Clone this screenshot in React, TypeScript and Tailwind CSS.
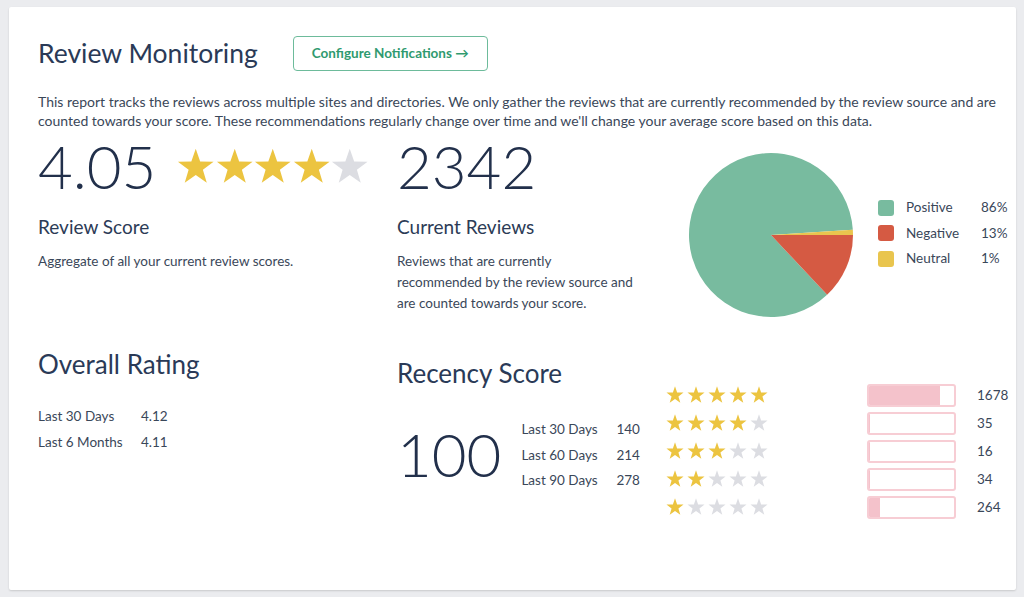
import React from "react";

const F = { fontFamily: "Lato, 'Noto Sans', sans-serif" };

function starPoints() {
  const R = 50;
  const r = R * 0.4;
  const cx = 50;
  const cy = 52;
  const pts: string[] = [];
  for (let i = 0; i < 10; i++) {
    const a = (Math.PI / 5) * i - Math.PI / 2;
    const rad = i % 2 === 0 ? R : r;
    pts.push(`${(cx + rad * Math.cos(a)).toFixed(2)},${(cy + rad * Math.sin(a)).toFixed(2)}`);
  }
  return pts.join(" ");
}
const PTS = starPoints();

function Star({ on, size }: { on: boolean; size: number }) {
  return (
    <svg width={size} height={size * 0.95} viewBox="0 0 100 95" className="block">
      <polygon points={PTS} fill={on ? "#ecc440" : "#dcdde2"} />
    </svg>
  );
}

function Stars({ n, size, gap }: { n: number; size: number; gap: string }) {
  return (
    <div className={`flex ${gap}`}>
      {[0, 1, 2, 3, 4].map((i) => (
        <Star key={i} on={i < n} size={size} />
      ))}
    </div>
  );
}

function Pie() {
  const cx = 84, cy = 84, R = 82;
  const pt = (deg: number) => {
    const a = (deg * Math.PI) / 180;
    return `${(cx + R * Math.cos(a)).toFixed(2)} ${(cy + R * Math.sin(a)).toFixed(2)}`;
  };
  const neg = 0.13 * 360;
  const neu = -0.01 * 360;
  return (
    <svg width="168" height="168" viewBox="0 0 168 168" className="block">
      <path d={`M${cx} ${cy} L${pt(neg)} A${R} ${R} 0 1 1 ${pt(neu)} Z`} fill="#78bb9f" />
      <path d={`M${cx} ${cy} L${pt(0)} A${R} ${R} 0 0 1 ${pt(neg)} Z`} fill="#d55a43" />
      <path d={`M${cx} ${cy} L${pt(neu)} A${R} ${R} 0 0 1 ${pt(0)} Z`} fill="#e9c54e" />
    </svg>
  );
}

const rows = [
  { n: 5, v: 1678 },
  { n: 4, v: 35 },
  { n: 3, v: 16 },
  { n: 2, v: 34 },
  { n: 1, v: 264 },
];

export default function App() {
  return (
    <div className="min-h-[597px] bg-[#ebecef] pt-[7px] pl-[9px] pr-[8px] pb-[7px]" style={F}>
      <div className="bg-white h-[583px] rounded-[2px] shadow-[0_1px_2px_rgba(0,0,0,0.15)] pl-[29px] pr-[10px] pt-[28px] text-[#2c3b56]">
        <div className="flex items-center">
          <h1 className="text-[26.5px] leading-[36px] font-normal text-[#2a3a57]">Review Monitoring</h1>
          <button className="ml-[35px] h-[35px] px-[18px] rounded-[4px] border border-[#6dbb9b] text-[#2f9a6f] text-[13.5px] font-bold flex items-center">
            Configure Notifications →
          </button>
        </div>
        <p className="mt-[21px] w-[975px] text-[14px] leading-[19px] text-[#3a4759]">
          This report tracks the reviews across multiple sites and directories. We only gather the reviews that are currently recommended by the review source and are counted towards your score. These recommendations regularly change over time and we'll change your average score based on this data.
        </p>

        <div className="flex">
          <div className="w-[359px] shrink-0">
            <div className="flex items-center">
              <div className="text-[60px] leading-[72px] font-light text-[#22304b]">4.05</div>
              <div className="ml-[21px]">
                <Stars n={4} size={37.5} gap="gap-[1px]" />
              </div>
            </div>
            <div className="mt-[12px] text-[19px] leading-[26px] text-[#2c3b56]">Review Score</div>
            <div className="mt-[11px] text-[13.5px] leading-[21px] text-[#3a4759]">Aggregate of all your current review scores.</div>
          </div>
          <div className="w-[290px] shrink-0">
            <div className="text-[60px] leading-[72px] font-light text-[#22304b]">2342</div>
            <div className="mt-[12px] text-[19px] leading-[26px] text-[#2c3b56]">Current Reviews</div>
            <div className="mt-[11px] w-[245px] text-[13.5px] leading-[21px] text-[#3a4759]">
              Reviews that are currently<br />recommended by the review source and are counted towards your score.
            </div>
          </div>
          <div className="flex items-center shrink-0 mt-[21px] self-start">
            <Pie />
            <div className="ml-[23px] flex flex-col gap-[9.5px] -mt-[4px]">
              {[
                { c: "#78bb9f", l: "Positive", p: "86%" },
                { c: "#d55a43", l: "Negative", p: "13%" },
                { c: "#e9c54e", l: "Neutral", p: "1%" },
              ].map((x) => (
                <div key={x.l} className="flex items-center h-[16px]">
                  <div className="w-[16px] h-[16px] rounded-[3px]" style={{ background: x.c }} />
                  <div className="ml-[12px] w-[75px] text-[13.5px] text-[#3a4759]">{x.l}</div>
                  <div className="text-[13.5px] text-[#3a4759]">{x.p}</div>
                </div>
              ))}
            </div>
          </div>
        </div>

        <div className="flex mt-[28px]">
          <div className="w-[359px] shrink-0">
            <div className="text-[26px] leading-[34px] text-[#2a3a57]">Overall Rating</div>
            <div className="mt-[22px] text-[13.5px] leading-[26px] text-[#3a4759]">
              <div className="flex"><span className="w-[103px]">Last 30 Days</span><span>4.12</span></div>
              <div className="flex"><span className="w-[103px]">Last 6 Months</span><span>4.11</span></div>
            </div>
          </div>
          <div className="w-[269px] shrink-0 pt-[9px]">
            <div className="text-[26px] leading-[34px] text-[#2a3a57]">Recency Score</div>
            <div className="flex items-center mt-[24px]">
              <div className="text-[60px] leading-[72px] font-light text-[#22304b]">100</div>
              <div className="ml-[20px] mt-[3px] text-[13.5px] leading-[25.5px] text-[#3a4759]">
                <div className="flex"><span className="w-[95px]">Last 30 Days</span><span>140</span></div>
                <div className="flex"><span className="w-[95px]">Last 60 Days</span><span>214</span></div>
                <div className="flex"><span className="w-[95px]">Last 90 Days</span><span>278</span></div>
              </div>
            </div>
          </div>
          <div className="pt-[34px] flex flex-col shrink-0">
            {rows.map((r) => (
              <div key={r.n} className="flex items-center h-[28px]">
                <div className="w-[201px]">
                  <Stars n={r.n} size={18} gap="gap-[3px]" />
                </div>
                <div className="w-[89px] h-[23px] rounded-[3px] border-2 border-[#f7cdd4] overflow-hidden">
                  <div className="h-full bg-[#f4c2cb]" style={{ width: `${(r.v / 2000) * 100}%` }} />
                </div>
                <div className="ml-[21px] text-[13.5px] text-[#3a4759]">{r.v}</div>
              </div>
            ))}
          </div>
        </div>
      </div>
    </div>
  );
}
